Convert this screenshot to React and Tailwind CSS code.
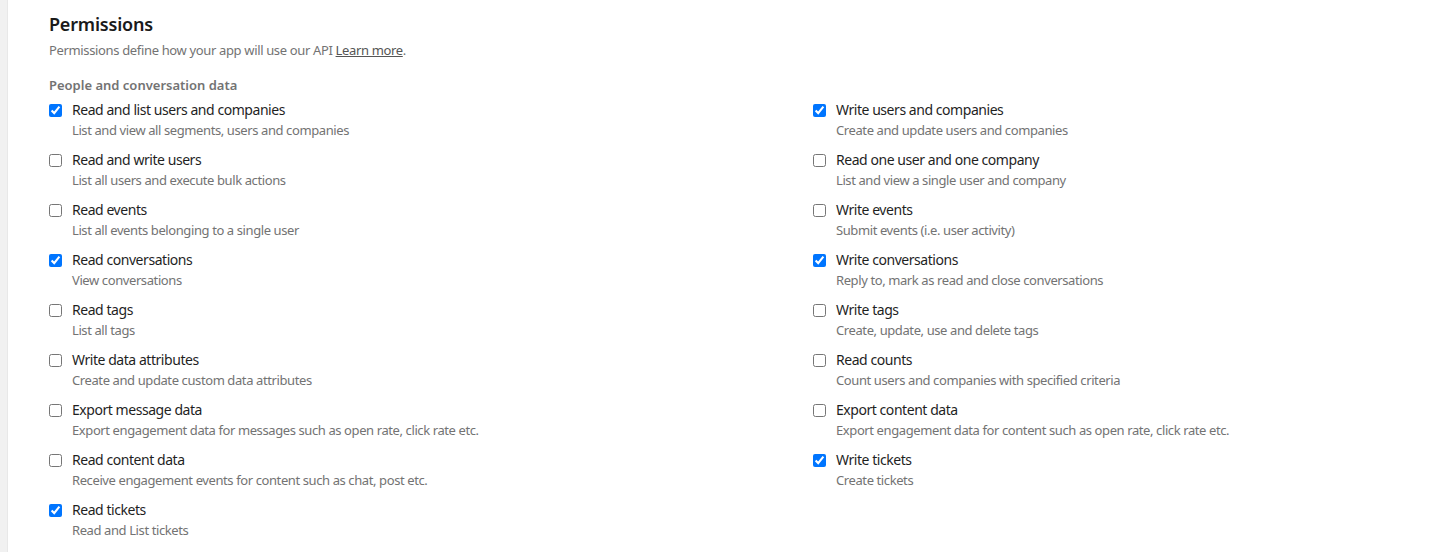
import React from "react";

const left = [
  ["Read and list users and companies", "List and view all segments, users and companies", true],
  ["Read and write users", "List all users and execute bulk actions", false],
  ["Read events", "List all events belonging to a single user", false],
  ["Read conversations", "View conversations", true],
  ["Read tags", "List all tags", false],
  ["Write data attributes", "Create and update custom data attributes", false],
  ["Export message data", "Export engagement data for messages such as open rate, click rate etc.", false],
  ["Read content data", "Receive engagement events for content such as chat, post etc.", false],
  ["Read tickets", "Read and List tickets", true],
];
const right = [
  ["Write users and companies", "Create and update users and companies", true],
  ["Read one user and one company", "List and view a single user and company", false],
  ["Write events", "Submit events (i.e. user activity)", false],
  ["Write conversations", "Reply to, mark as read and close conversations", true],
  ["Write tags", "Create, update, use and delete tags", false],
  ["Read counts", "Count users and companies with specified criteria", false],
  ["Export content data", "Export engagement data for content such as open rate, click rate etc.", false],
  ["Write tickets", "Create tickets", true],
];

function Item({ title, desc, checked }) {
  return (
    <label className="flex items-start h-[50px]">
      <input
        type="checkbox"
        defaultChecked={checked}
        className="m-0 mt-[4px] w-[13px] h-[13px] shrink-0"
      />
      <div className="ml-[10px]">
        <div className="text-[14px] leading-[20px] tracking-[-0.45px] text-[#1f1f1f]">{title}</div>
        <div className="text-[13px] leading-[20px] tracking-[-0.4px] text-[#737373]">{desc}</div>
      </div>
    </label>
  );
}

export default function App() {
  return (
    <div className="flex w-[1432px] h-[552px] bg-white overflow-hidden" style={{ fontFamily: '"Noto Sans", sans-serif' }}>
      <div className="w-[8px] shrink-0 bg-[#f1f1f1] border-r border-[#e8e8e8]" />
      <div className="pl-[41px] pt-[12px] flex-1">
        <h1 className="text-[18px] leading-[24px] font-semibold tracking-[-0.2px] text-[#1a1a1a]">Permissions</h1>
        <p className="mt-[4px] text-[13px] leading-[20px] tracking-[-0.35px] text-[#737373]">
          Permissions define how your app will use our API <a className="underline text-[#555]">Learn more</a>.
        </p>
        <div className="mt-[15px] text-[13px] leading-[20px] font-semibold text-[#737373]">People and conversation data</div>
        <div className="mt-[5px] grid grid-cols-[764px_1fr]">
          <div className="flex flex-col">
            {left.map(([t, d, c]) => <Item key={t} title={t} desc={d} checked={c} />)}
          </div>
          <div className="flex flex-col">
            {right.map(([t, d, c]) => <Item key={t} title={t} desc={d} checked={c} />)}
          </div>
        </div>
      </div>
    </div>
  );
}
